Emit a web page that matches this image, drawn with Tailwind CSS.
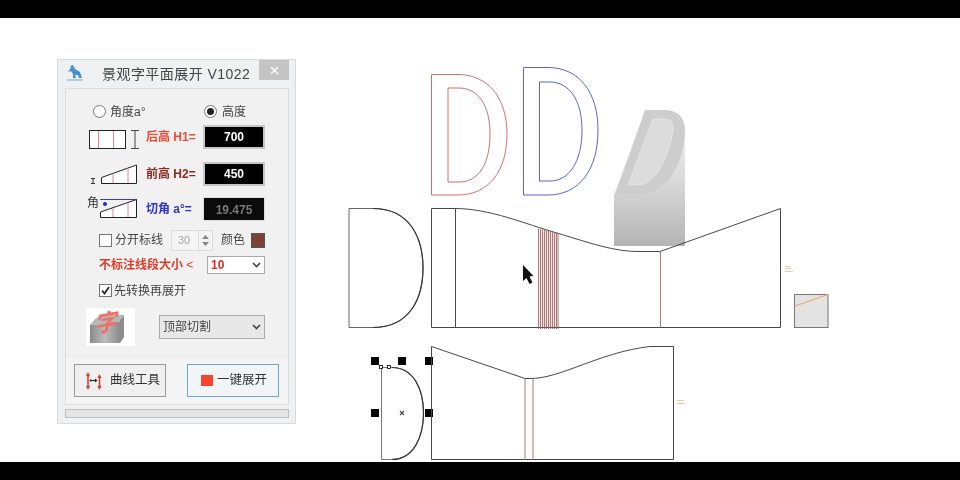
<!DOCTYPE html>
<html lang="zh-CN">
  <head>
    <meta charset="UTF-8" />
    <title>景观字平面展开</title>
    <script src="https://cdn.jsdelivr.net/npm/@tailwindcss/browser@4"></script>
  </head>
  <body class="bg-white">
    <div class="w-[960px] h-[480px] flex flex-col overflow-hidden blur-[0.35px] font-['Liberation_Sans','Noto_Sans_CJK_SC',sans-serif] text-[#333]">
      <div class="h-[18px] bg-black shrink-0"></div>

      <!-- Canvas area -->
      <div class="relative flex-1 bg-white">
        <svg class="absolute left-0 top-0" width="960" height="444" viewBox="0 18 960 444" fill="none">
          <!-- outline letters -->
          <path d="M431.5 74.5H458C488 74.5 507 98 507 134C507 172 488 195 458 195H431.5Z M448 88H459C478 88 490 105 490 134C490 165 478 182 459 182H448Z" stroke="#c9605e" stroke-width="0.9" />
          <path d="M523.5 67.5H548C579 67.5 598 92 598 130C598 170 579 195 548 195H523.5Z M539.5 82H550C569 82 582 100 582 130C582 162 569 181 550 181H539.5Z" stroke="#4c55c0" stroke-width="0.9" />

          <!-- extruded letter -->
          <defs>
            <linearGradient id="ext" x1="0" y1="0" x2="0" y2="1">
              <stop offset="0" stop-color="#f6f6f6" />
              <stop offset="0.45" stop-color="#dedede" />
              <stop offset="1" stop-color="#b4b4b4" />
            </linearGradient>
          </defs>
          <path d="M614 195L645 110H664C678 110 685 118 685 130V246H614Z" fill="url(#ext)" />
          <path d="M616 194L645 110H664C678 110 685 118 685 130C685 160 668 194 640 194Z" fill="#cdcdcd" />
          <path d="M628 185L653 119H665C672 119 674 124 673 131C668 160 655 185 637 185Z" fill="#dcdcdc" stroke="#ececec" stroke-width="0.6" />

          <!-- flat D -->
          <path d="M349 208.5H373C410 208.5 423 238 423 268C423 298 410 327.5 373 327.5H349Z" stroke="#666" stroke-width="1" />
          <path d="M373 208.5C410 208.5 423 238 423 268C423 298 410 327.5 373 327.5" stroke="#3a3232" stroke-width="1.2" />

          <!-- first strip -->
          <path d="M431.5 327.5V208.5H455C490 208.5 525 224 557 233C590 243 615 252 640 251.5H660L780.5 208.5V327.5H431.5Z" stroke="#484848" stroke-width="1" />
          <path d="M455.5 208.5V327.5" stroke="#484848" />
          <path d="M660.5 251V327.5" stroke="#a87878" />
          <path d="M538.5 228.5V329M540.5 229V329M542.5 229.5V329M544.5 230V329M546.5 230.5V329M548.5 231V329M550.5 231.5V329M552.5 232V329M554.5 232.5V329M556.5 233V329M558 233.5V329" stroke="#9c5a55" stroke-width="0.8" />
          <path d="M538 228.5L558 233.5V328H538Z" fill="#b0605c" fill-opacity="0.14" />
          <path d="M785 266.5H790M785 268.5H791M785 271.5H793" stroke="#f2c9a0" />

          <!-- small swatch -->
          <rect x="794.5" y="294.5" width="33.5" height="33" fill="#e3e3e3" stroke="#777" />
          <path d="M795 306L828 294.5" stroke="#f0a868" stroke-width="1.2" />

          <!-- selected D -->
          <path d="M381.5 367.5H392C414 367.5 423.5 390 423.5 413C423.5 436 414 459.5 392 459.5H381.5Z" stroke="#666" stroke-width="0.9" />
          <path d="M392 367.5C414 367.5 423.5 390 423.5 413C423.5 436 414 459.5 392 459.5" stroke="#333" stroke-width="1.2" />
          <rect x="371" y="357" width="8" height="8" fill="#000" />
          <rect x="398" y="357" width="8" height="8" fill="#000" />
          <rect x="425" y="357" width="8" height="8" fill="#000" />
          <rect x="371" y="409" width="8" height="8" fill="#000" />
          <rect x="425" y="409" width="8" height="8" fill="#000" />
          <rect x="379.5" y="365.5" width="3" height="3" fill="#fff" stroke="#000" stroke-width="0.8" />
          <rect x="387.5" y="365.5" width="3" height="3" fill="#fff" stroke="#000" stroke-width="0.8" />
          <path d="M400 411L404 415M404 411L400 415" stroke="#444" stroke-width="1.1" />

          <!-- second strip -->
          <path d="M431.5 459.5V346.5L525 378.5H530C560 379 600 352 650 346.5H673.5V459.5H431.5Z" stroke="#484848" stroke-width="1" />
          <path d="M525 378.5V460M533 378.5V460" stroke="#a87878" />
          <path d="M677 400.5H684M677 403.5H685" stroke="#f2c9a0" />

          <!-- mouse cursor -->
          <path d="M523 265V281L526.5 278L529.5 284L532.5 282.5L529.5 276.5L533.5 276Z" fill="#111" />
        </svg>

        <!-- Dialog window -->
        <div class="absolute left-[57px] top-[41px] w-[239px] h-[365px] bg-[#eef0f2] border border-[#d8dade] flex flex-col">
          <div class="h-[28px] shrink-0 flex items-start relative">
            <svg class="mt-[4px] ml-[8px]" width="18" height="18" viewBox="0 0 18 18" fill="none">
              <path d="M4 2L7 1L9 5L14 8L15 11L16 14H13L12 11L9 11L10 14H7L7 10L5 7L2 8L4 5L5 3Z" fill="#4a90d0" />
              <path d="M1 16H17" stroke="#8fbce0" stroke-width="1.4" />
            </svg>
            <span class="ml-[18px] mt-[5px] text-[14px] leading-[18px] tracking-[0.45px] text-[#444]">景观字平面展开 V1022</span>
            <div class="absolute right-[6px] top-0 w-[30px] h-[20px] bg-[#c4c4c4] flex items-center justify-center">
              <svg width="9" height="9" viewBox="0 0 9 9"><path d="M1 1L8 8M8 1L1 8" stroke="#fff" stroke-width="1.4" /></svg>
            </div>
          </div>

          <div class="mx-[7px] w-[224px] border border-[#dcdcdc] bg-[#f1f1f1] flex flex-col text-[12px]">
            <!-- mode -->
            <div class="mt-[14px] h-[17px] flex items-center pl-[27px] text-[#444]">
              <span class="w-[13px] h-[13px] rounded-full border border-[#777] bg-white"></span>
              <span class="ml-[4px] w-[94px]">角度a°</span>
              <span class="w-[13px] h-[13px] rounded-full border border-[#777] bg-white flex items-center justify-center"><span class="w-[7px] h-[7px] rounded-full bg-[#222]"></span></span>
              <span class="ml-[5px]">高度</span>
            </div>

            <!-- H1 -->
            <div class="mt-[5px] h-[24px] pl-[23px] flex items-center">
              <svg class="w-[57px] h-[24px] shrink-0 overflow-visible" viewBox="0 0 57 24" fill="none">
                <rect x="0.5" y="5.5" width="36" height="18" fill="#fff" stroke="#222" />
                <path d="M9.5 6V23M24.5 6V23" stroke="#e58a80" />
                <path d="M42 5.5H50M46 5.5V23.5M42 23.5H50" stroke="#444" />
              </svg>
              <span class="w-[57px] font-bold text-[#ef4a38] whitespace-nowrap">后高 H1=</span>
              <div class="w-[62px] h-[24px] border-2 border-[#c6c6c6] bg-black text-white font-bold text-center leading-[20px]">700</div>
            </div>

            <!-- H2 -->
            <div class="mt-[13px] h-[24px] pl-[23px] flex items-center">
              <svg class="w-[57px] h-[24px] shrink-0 overflow-visible" viewBox="0 0 57 24" fill="none">
                <path d="M2 16.5H6M4 16.5V21.5M2 21.5H6" stroke="#333" />
                <path d="M12.5 21.5V15.5L47.5 3V21.5Z" fill="#fff" stroke="#222" />
                <path d="M24 11.5V21M39 6V21" stroke="#e58a80" />
              </svg>
              <span class="w-[57px] font-bold text-[#8d2c22] whitespace-nowrap">前高 H2=</span>
              <div class="w-[62px] h-[24px] border-2 border-[#c6c6c6] bg-black text-white font-bold text-center leading-[20px]">450</div>
            </div>

            <!-- angle -->
            <div class="mt-[11px] h-[24px] pl-[23px] flex items-center">
              <svg class="w-[57px] h-[24px] shrink-0 overflow-visible" viewBox="0 0 57 24" fill="none">
                <text x="-2" y="10" font-size="12" fill="#333" font-family="Noto Sans CJK SC">角</text>
                <path d="M11 2.5H48" stroke="#3a3ad0" />
                <circle cx="16" cy="7" r="2" fill="#2626c8" />
                <path d="M11.5 20.5V15L47.5 2.5V20.5Z" fill="#fff" stroke="#222" />
                <path d="M24 11V20M39 6V20" stroke="#e58a80" />
              </svg>
              <span class="w-[57px] font-bold text-[#2f33d6] whitespace-nowrap">切角 a°=</span>
              <div class="w-[62px] h-[24px] bg-[#0b0b0b] text-[#777] font-bold text-center leading-[24px] border border-[#ddd]">19.475</div>
            </div>

            <!-- split marks -->
            <div class="mt-[10px] h-[18px] pl-[33px] flex items-center text-[#444]">
              <span class="w-[13px] h-[13px] border border-[#777] bg-white shrink-0"></span>
              <span class="ml-[3px] w-[49px] whitespace-nowrap">分开标线</span>
              <div class="ml-[7px] w-[42px] h-[21px] border border-[#dcdcdc] bg-[#f4f4f4] flex items-center text-[#aaa] text-[11px]">
                <span class="pl-[6px] flex-1">30</span>
                <span class="w-[14px] h-full border-l border-[#ddd] flex flex-col items-center justify-center gap-[3px]">
                  <svg width="7" height="4" viewBox="0 0 7 4"><path d="M3.5 0L7 4H0Z" fill="#888" /></svg>
                  <svg width="7" height="4" viewBox="0 0 7 4"><path d="M0 0H7L3.5 4Z" fill="#888" /></svg>
                </span>
              </div>
              <span class="ml-[8px] w-[30px]">颜色</span>
              <span class="w-[14px] h-[15px] bg-[#7a4238] border border-[#555]"></span>
            </div>

            <!-- min segment -->
            <div class="mt-[7px] h-[18px] pl-[33px] flex items-center">
              <span class="w-[108px] font-bold text-[#e23b2c] whitespace-nowrap">不标注线段大小 <span class="font-normal">&lt;</span></span>
              <div class="w-[58px] h-[18px] border border-[#aaa] bg-white flex items-center justify-between pl-[3px] pr-[3px] font-bold text-[#d62d20]">
                <span>10</span>
                <svg width="9" height="6" viewBox="0 0 9 6" fill="none"><path d="M1 1L4.5 4.5L8 1" stroke="#444" stroke-width="1.6" /></svg>
              </div>
            </div>

            <!-- convert first -->
            <div class="mt-[8px] h-[17px] pl-[33px] flex items-center text-[#444]">
              <span class="w-[13px] h-[13px] border border-[#777] bg-white flex items-center justify-center shrink-0">
                <svg width="9" height="9" viewBox="0 0 9 9" fill="none"><path d="M1 4.5L3.5 7.5L8 1" stroke="#222" stroke-width="1.7" /></svg>
              </span>
              <span class="ml-[2px] whitespace-nowrap">先转换再展开</span>
            </div>

            <!-- cut mode -->
            <div class="mt-[9px] h-[38px] pl-[20px] flex items-center">
              <svg class="shrink-0 overflow-visible" width="49" height="38" viewBox="0 0 49 38" fill="none">
                <defs>
                  <linearGradient id="block" x1="0" y1="0" x2="1" y2="0">
                    <stop offset="0" stop-color="#8a8a8a" />
                    <stop offset="0.5" stop-color="#bdbdbd" />
                    <stop offset="1" stop-color="#8c8c8c" />
                  </linearGradient>
                </defs>
                <rect width="49" height="38" fill="#fff" />
                <path d="M9 11L15 7H38V29L34 35H4V17Z" fill="#b8b8b8" />
                <path d="M4 17H21V35H4ZM21 14H34V35H21Z" fill="url(#block)" />
                <path d="M34 12L38 8V29L34 35Z" fill="#8d8d8d" />
                <text font-size="23" font-weight="700" fill="#f0706a" font-family="Noto Sans CJK SC" transform="translate(9 25) rotate(-10) skewX(-18)">字</text>
              </svg>
              <div class="ml-[24px] w-[106px] h-[24px] border border-[#aaa] bg-[#e8e8e8] flex items-center justify-between pl-[3px] pr-[3px] text-[#444]">
                <span>顶部切割</span>
                <svg width="9" height="6" viewBox="0 0 9 6" fill="none"><path d="M1 1L4.5 4.5L8 1" stroke="#444" stroke-width="1.6" /></svg>
              </div>
            </div>

            <!-- actions -->
            <div class="mt-[10px] h-[48px] bg-[#f4f4f4] border-t border-[#ececec] pt-[7px] pl-[8px] flex items-start gap-[21px] text-[12.5px] text-[#333]">
              <div class="w-[92px] h-[33px] border border-[#999] bg-[#f0f0f0] flex items-center pl-[11px]">
                <svg class="shrink-0" width="18" height="18" viewBox="0 0 18 18" fill="none">
                  <path d="M2 2V16M13.5 4V16" stroke="#e0352b" stroke-width="1.5" />
                  <path d="M0.5 4L2 1.5L3.5 4M0.5 14L2 16.5L3.5 14M12 6L13.5 3.5L15 6M12 14L13.5 16.5L15 14" stroke="#e0352b" stroke-width="1.3" />
                  <circle cx="4.5" cy="8.5" r="1" fill="#222" />
                  <path d="M5 8.5H10" stroke="#222" stroke-width="1.2" />
                  <path d="M9 6.5L11.5 8.5L9 10.5Z" fill="#222" />
                </svg>
                <span class="ml-[6px] whitespace-nowrap">曲线工具</span>
              </div>
              <div class="w-[92px] h-[33px] border border-[#69a7d6] bg-[#f2f5f7] flex items-center pl-[13px]">
                <span class="w-[12px] h-[11px] bg-[#f4452f] shrink-0"></span>
                <span class="ml-[4px] whitespace-nowrap">一键展开</span>
              </div>
            </div>
          </div>

          <!-- status bar -->
          <div class="mx-[7px] mt-[4px] w-[224px] h-[9px] border border-[#bdbdbd] bg-[#e6e6e6]"></div>
        </div>
      </div>

      <div class="h-[18px] bg-black shrink-0"></div>
    </div>
  </body>
</html>
